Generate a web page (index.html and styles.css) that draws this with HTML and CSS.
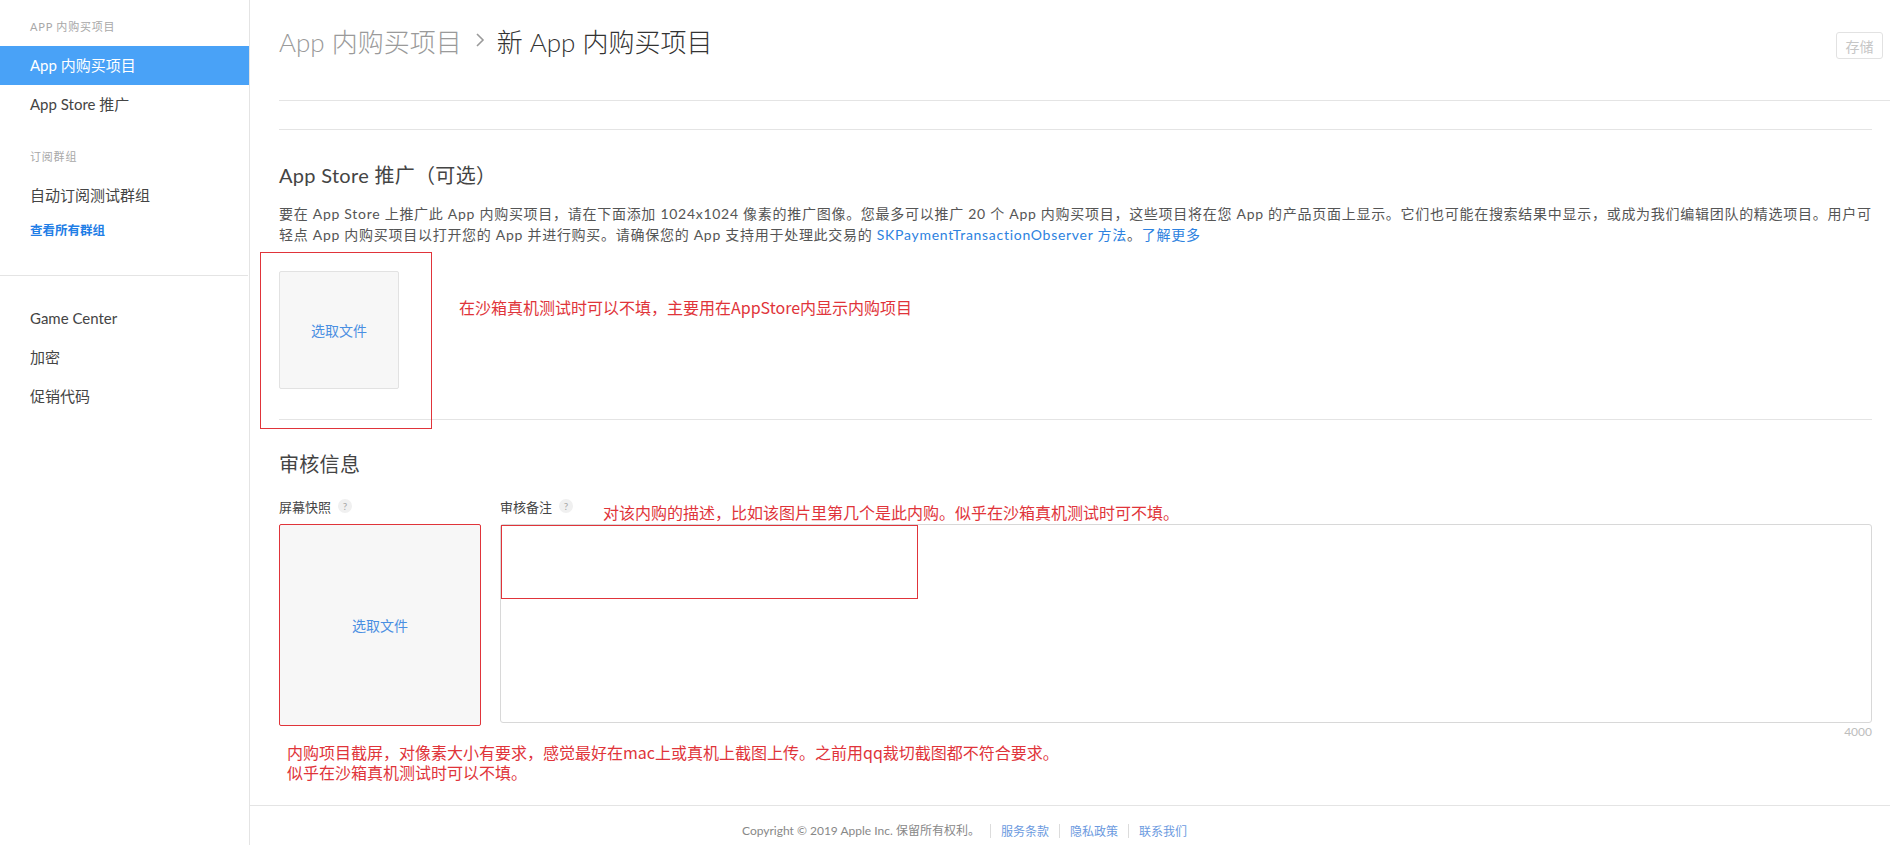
FILE: index.html
```html
<!DOCTYPE html>
<html lang="zh-CN">
<head>
<meta charset="utf-8">
<title>新 App 内购买项目</title>
<link rel="stylesheet" href="styles.css">
</head>
<body>
<div class="page">
  <aside class="sidebar">
    <div class="nav-heading first">APP 内购买项目</div>
    <a class="nav-item active">App 内购买项目</a>
    <a class="nav-item">App Store 推广</a>
    <div class="nav-heading">订阅群组</div>
    <a class="nav-item">自动订阅测试群组</a>
    <a class="nav-link">查看所有群组</a>
    <div class="nav-divider"></div>
    <a class="nav-item">Game Center</a>
    <a class="nav-item">加密</a>
    <a class="nav-item">促销代码</a>
  </aside>

  <main class="main">
    <div class="content">
      <header class="header">
        <div class="breadcrumb">
          <span class="crumb-parent">App 内购买项目</span>
          <svg class="chevron" width="10" height="16" viewBox="0 0 10 16"><polyline points="2,2 8,8 2,14" fill="none" stroke="#9a9a9a" stroke-width="1.6"/></svg>
          <span class="crumb-current">新 App 内购买项目</span>
        </div>
        <button class="save-btn">存储</button>
      </header>

      <section class="section promo">
        <h2 class="section-title">App Store 推广（可选）</h2>
        <p class="desc">要在 App Store 上推广此 App 内购买项目，请在下面添加 1024x1024 像素的推广图像。您最多可以推广 20 个 App 内购买项目，这些项目将在您 App 的产品页面上显示。它们也可能在搜索结果中显示，或成为我们编辑团队的精选项目。用户可<br>轻点 App 内购买项目以打开您的 App 并进行购买。请确保您的 App 支持用于处理此交易的 <a class="link">SKPaymentTransactionObserver 方法</a>。<a class="link">了解更多</a></p>
        <div class="upload-row">
          <div class="upload-wrap">
            <div class="upload small">选取文件</div>
            <div class="annot-box promo-box"></div>
          </div>
          <div class="annot annot-1">在沙箱真机测试时可以不填，主要用在AppStore内显示内购项目</div>
        </div>
      </section>

      <section class="section review">
        <h2 class="section-title">审核信息</h2>
        <div class="fields">
          <div class="field shot-field">
            <div class="label">屏幕快照 <span class="help">?</span></div>
            <div class="upload large">选取文件</div>
          </div>
          <div class="field notes-field">
            <div class="label">审核备注 <span class="help">?</span><span class="annot annot-2">对该内购的描述，比如该图片里第几个是此内购。似乎在沙箱真机测试时可不填。</span></div>
            <div class="textarea-wrap">
              <div class="textarea"></div>
              <div class="annot-box notes-box"></div>
            </div>
            <div class="counter">4000</div>
          </div>
        </div>
        <div class="annot annot-3">内购项目截屏，对像素大小有要求，感觉最好在mac上或真机上截图上传。之前用qq裁切截图都不符合要求。<br>似乎在沙箱真机测试时可以不填。</div>
      </section>
    </div>

    <footer class="footer">
      <span class="copy">Copyright © 2019 Apple Inc. 保留所有权利。</span>
      <span class="sep"></span>
      <a class="foot-link">服务条款</a>
      <span class="sep"></span>
      <a class="foot-link">隐私政策</a>
      <span class="sep"></span>
      <a class="foot-link">联系我们</a>
    </footer>
  </main>
</div>
</body>
</html>
```

FILE: styles.css
```css
* { box-sizing: border-box; }

html, body {
  margin: 0;
  padding: 0;
  background: #fff;
}

body {
  font-family: "Lato", "Noto Sans CJK SC", sans-serif;
  color: #333;
}

.page {
  display: flex;
  height: 845px;
  overflow: hidden;
}

/* Sidebar */
.sidebar {
  width: 250px;
  flex: none;
  border-right: 1px solid #e4e4e4;
  padding-top: 18px;
  display: flex;
  flex-direction: column;
}

.nav-heading {
  padding: 0 30px;
  font-size: 11px;
  line-height: 16px;
  letter-spacing: 0.8px;
  color: #a8a8a8;
  margin-top: 25px;
  margin-bottom: 11px;
}

.nav-heading.first {
  margin-top: 1px;
  margin-bottom: 11px;
}

.nav-item {
  display: block;
  height: 39px;
  line-height: 39px;
  padding: 0 30px;
  font-size: 15px;
  color: #444;
}

.nav-item.active {
  background: #49a2f7;
  color: #fff;
}

.nav-link {
  display: block;
  padding: 0 30px;
  margin-top: 8px;
  font-size: 12.5px;
  line-height: 16px;
  color: #1f7ee6;
  font-weight: 600;
}

.nav-divider {
  height: 1px;
  background: #e4e4e4;
  margin: 36px 1px 23px 0;
}

/* Main */
.main {
  flex: 1;
  display: flex;
  flex-direction: column;
  min-width: 0;
}

.content {
  flex: 1;
  padding: 0 18px 0 29px;
}

.header {
  height: 101px;
  margin-right: -18px;
  border-bottom: 1px solid #e4e4e4;
  display: flex;
  justify-content: space-between;
  align-items: flex-start;
  padding-right: 7px;
}

.breadcrumb {
  margin-top: 24px;
  display: flex;
  align-items: center;
  height: 32px;
  font-size: 26px;
  font-weight: 300;
}

.crumb-parent { color: #9a9a9a; }
.crumb-current { color: #333; }

.chevron {
  margin: 0 12px 0 13px;
  flex: none;
}

.save-btn {
  margin-top: 32px;
  width: 47px;
  height: 27px;
  border: 1px solid #e2e2e2;
  border-radius: 3px;
  background: #fff;
  color: #c6c6c6;
  font-family: "Noto Sans CJK SC", sans-serif;
  font-size: 14px;
  padding: 0;
}

.section {
  border-top: 1px solid #e4e4e4;
}

.promo {
  margin-top: 28px;
  padding-top: 32px;
  padding-bottom: 30px;
}

.section-title {
  margin: 0 0 15px;
  font-size: 20px;
  line-height: 26px;
  font-weight: 400;
  color: #444;
  letter-spacing: 0.3px;
}

.desc {
  margin: 0;
  font-size: 14px;
  line-height: 21px;
  color: #555;
  letter-spacing: 0.72px;
  white-space: nowrap;
}

.link { color: #2d82e0; }

.upload-row {
  margin-top: 26px;
  display: flex;
  align-items: flex-start;
}

.upload-wrap { position: relative; }

.upload {
  background: #f7f7f7;
  border: 1px solid #e2e2e2;
  border-radius: 2px;
  color: #4a8fe2;
  font-family: "Noto Sans CJK SC", sans-serif;
  font-size: 14px;
  display: flex;
  align-items: center;
  justify-content: center;
}

.upload.small {
  width: 120px;
  height: 118px;
}

.upload.large {
  width: 202px;
  height: 202px;
  border-color: #e0343a;
}

.annot-box {
  position: absolute;
  border: 1px solid #e0343a;
  pointer-events: none;
}

.promo-box {
  left: -19px;
  top: -19px;
  width: 172px;
  height: 177px;
}

.annot {
  font-family: "Noto Sans CJK SC", sans-serif;
  color: #e0343a;
  font-size: 16px;
  line-height: 20px;
}

.annot-1 {
  margin-left: 60px;
  margin-top: 26px;
}

.review {
  padding-top: 31px;
}

.review .section-title { margin-bottom: 20px; }

.fields {
  display: flex;
  gap: 19px;
}

.field { display: flex; flex-direction: column; }
.notes-field { flex: 1; }

.label {
  display: flex;
  align-items: center;
  height: 18px;
  margin-bottom: 9px;
  font-family: "Noto Sans CJK SC", sans-serif;
  font-size: 13px;
  color: #444;
  white-space: nowrap;
}

.help {
  display: inline-flex;
  align-items: center;
  justify-content: center;
  width: 14px;
  height: 14px;
  margin-left: 7px;
  border-radius: 50%;
  background: #f0f0f0;
  color: #a8a8a8;
  font-family: "Lato", sans-serif;
  font-size: 10px;
}

.annot-2 {
  margin-left: 30px;
  margin-top: 11px;
}

.textarea-wrap { position: relative; }

.textarea {
  height: 199px;
  border: 1px solid #d8d8d8;
  border-radius: 3px;
  background: #fff;
}

.notes-box {
  left: 1px;
  top: 1px;
  width: 417px;
  height: 74px;
}

.counter {
  margin-top: 1px;
  text-align: right;
  font-size: 12px;
  line-height: 15px;
  color: #bdbdbd;
}

.annot-3 {
  margin-top: 3px;
  padding-left: 8px;
}

/* Footer */
.footer {
  border-top: 1px solid #e4e4e4;
  height: 40px;
  padding: 17px 0 0 492px;
  display: flex;
  align-items: flex-start;
  font-size: 12px;
  line-height: 16px;
  color: #888;
}

.copy { font-family: "Lato", "Noto Sans CJK SC", sans-serif; }

.sep {
  width: 1px;
  height: 14px;
  margin: 1px 10px 0;
  background: #dcdcdc;
}

.foot-link {
  color: #6b9ae0;
  font-family: "Noto Sans CJK SC", sans-serif;
}
```
